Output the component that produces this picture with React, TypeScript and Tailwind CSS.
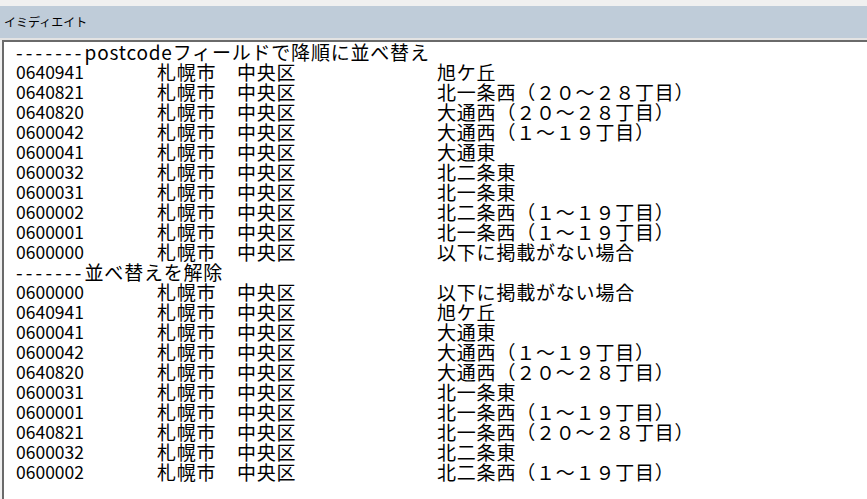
const sorted: [string, string][] = [
  ["0640941", "旭ケ丘"],
  ["0640821", "北一条西（２０～２８丁目）"],
  ["0640820", "大通西（２０～２８丁目）"],
  ["0600042", "大通西（１～１９丁目）"],
  ["0600041", "大通東"],
  ["0600032", "北二条東"],
  ["0600031", "北一条東"],
  ["0600002", "北二条西（１～１９丁目）"],
  ["0600001", "北一条西（１～１９丁目）"],
  ["0600000", "以下に掲載がない場合"],
]

const unsorted: [string, string][] = [
  ["0600000", "以下に掲載がない場合"],
  ["0640941", "旭ケ丘"],
  ["0600041", "大通東"],
  ["0600042", "大通西（１～１９丁目）"],
  ["0640820", "大通西（２０～２８丁目）"],
  ["0600031", "北一条東"],
  ["0600001", "北一条西（１～１９丁目）"],
  ["0640821", "北一条西（２０～２８丁目）"],
  ["0600032", "北二条東"],
  ["0600002", "北二条西（１～１９丁目）"],
]

function Row({ code, town }: { code: string; town: string }) {
  return (
    <div className="flex h-[20px] items-center whitespace-nowrap">
      <span className="w-[141px] shrink-0 text-[17.5px]">{code}</span>
      <span className="w-[80px] shrink-0 tracking-[0.8px]">札幌市</span>
      <span className="w-[200px] shrink-0 tracking-[0.8px]">中央区</span>
      <span className="tracking-[0.8px]">{town}</span>
    </div>
  )
}

function Heading({ text }: { text: string }) {
  return (
    <div className="flex h-[20px] items-center whitespace-nowrap">
      <span className="tracking-[3.2px]">-------</span>
      <span className="tracking-[0.8px]">{text}</span>
    </div>
  )
}

export default function App() {
  return (
    <div
      className="w-[867px] h-[499px] overflow-hidden bg-[#f0f0f0] pt-[6px] flex flex-col text-black [text-spacing-trim:space-all]"
      style={{ fontFamily: '"Noto Sans CJK JP", "Noto Sans", sans-serif' }}
    >
      <div className="h-[32px] bg-[#bfccd9] flex items-center px-[4px] text-[12px]">イミディエイト</div>
      <div className="h-[2px] bg-[#e3e3e3]" />
      <div className="flex-1 ml-[2px] border-t-2 border-l-2 border-[#6a6a6a] bg-white pl-[12px] text-[19px] leading-[20px]">
        <Heading text="postcodeフィールドで降順に並べ替え" />
        {sorted.map(([c, t], i) => (
          <Row key={"s" + i} code={c} town={t} />
        ))}
        <Heading text="並べ替えを解除" />
        {unsorted.map(([c, t], i) => (
          <Row key={"u" + i} code={c} town={t} />
        ))}
      </div>
    </div>
  )
}
